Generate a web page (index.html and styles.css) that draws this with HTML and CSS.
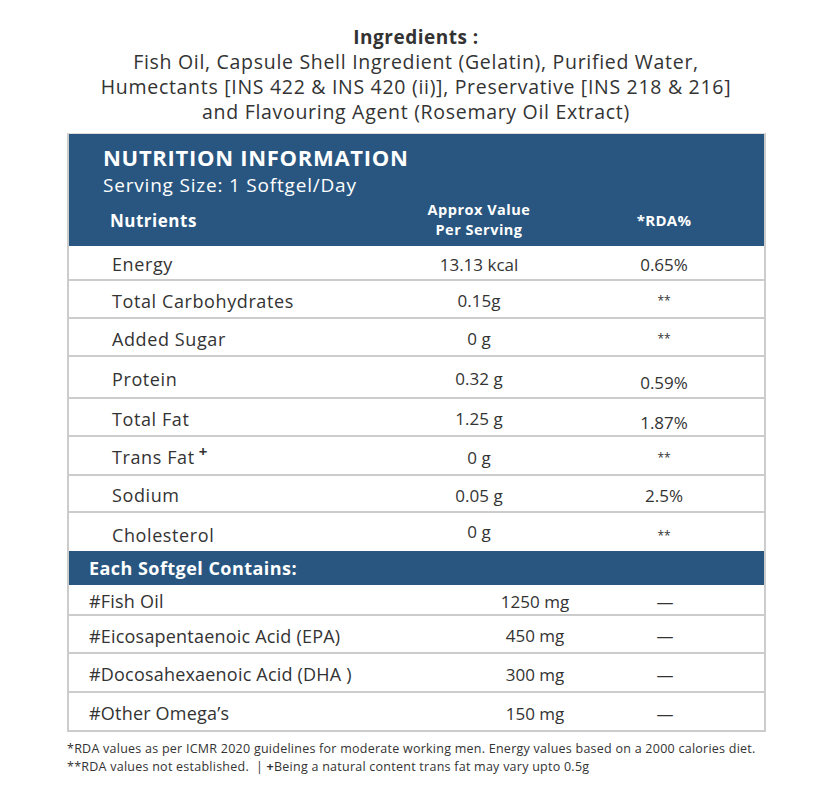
FILE: index.html
```html
<!DOCTYPE html>
<html>
<head>
<meta charset="utf-8">
<link rel="stylesheet" href="styles.css">
</head>
<body>
<div class="page">
  <section class="ingredients">
    <h2 class="ing-title">Ingredients :</h2>
    <p class="ing-text">Fish Oil, Capsule Shell Ingredient (Gelatin), Purified Water,<br>Humectants [INS 422 &amp; INS 420 (ii)], Preservative [INS 218 &amp; 216]<br>and Flavouring Agent (Rosemary Oil Extract)</p>
  </section>

  <section class="table">
    <div class="head">
      <div class="head-title">NUTRITION INFORMATION</div>
      <div class="head-serving">Serving Size: 1 Softgel/Day</div>
      <div class="head-cols">
        <div class="hc-name">Nutrients</div>
        <div class="hc-val"><div>Approx Value</div><div>Per Serving</div></div>
        <div class="hc-rda">*RDA%</div>
      </div>
    </div>

    <div class="row r35"><span class="c-name">Energy</span><span class="c-val">13.13 kcal</span><span class="c-rda">0.65%</span></div>
    <div class="row"><span class="c-name">Total Carbohydrates</span><span class="c-val">0.15g</span><span class="c-rda star">**</span></div>
    <div class="row"><span class="c-name">Added Sugar</span><span class="c-val">0 g</span><span class="c-rda star">**</span></div>
    <div class="row r42"><span class="c-name">Protein</span><span class="c-val">0.32 g</span><span class="c-rda low">0.59%</span></div>
    <div class="row"><span class="c-name">Total Fat</span><span class="c-val">1.25 g</span><span class="c-rda low">1.87%</span></div>
    <div class="row r39"><span class="c-name">Trans Fat<sup class="plus">+</sup></span><span class="c-val">0 g</span><span class="c-rda star">**</span></div>
    <div class="row r37"><span class="c-name">Sodium</span><span class="c-val">0.05 g</span><span class="c-rda">2.5%</span></div>
    <div class="row nb"><span class="c-name">Cholesterol</span><span class="c-val up">0 g</span><span class="c-rda star">**</span></div>

    <div class="sub-head">Each Softgel Contains:</div>

    <div class="row2 r31"><span class="d-name">#Fish Oil</span><span class="d-val">1250 mg</span><span class="d-dash">—</span></div>
    <div class="row2"><span class="d-name">#Eicosapentaenoic Acid (EPA)</span><span class="d-val">450 mg</span><span class="d-dash">—</span></div>
    <div class="row2 r39"><span class="d-name">#Docosahexaenoic Acid (DHA )</span><span class="d-val">300 mg</span><span class="d-dash">—</span></div>
    <div class="row2 r39"><span class="d-name">#Other Omega’s</span><span class="d-val">150 mg</span><span class="d-dash">—</span></div>
  </section>

  <section class="notes">
    <p>*RDA values as per ICMR 2020 guidelines for moderate working men. Energy values based on a 2000 calories diet.</p>
    <p>**RDA values not established. &nbsp;| <b>+</b>Being a natural content trans fat may vary upto 0.5g</p>
  </section>
</div>
</body>
</html>
```

FILE: styles.css
```css
* { box-sizing: border-box; }
html, body { margin: 0; padding: 0; background: #fff; }
body {
  font-family: "Open Sans", "Noto Sans", sans-serif;
  color: #333;
}
.page { width: 832px; }

.ingredients { text-align: center; padding-top: 25px; }
.ing-title {
  margin: 0;
  font-size: 19px;
  font-weight: 700;
  line-height: 24px;
  letter-spacing: 0.5px;
  color: #333;
}
.ing-text {
  margin: 0;
  font-size: 19.5px;
  line-height: 25px;
  letter-spacing: 0.7px;
  color: #333;
}

.table {
  margin: 9px 0 0 67px;
  width: 699px;
  border-left: 2px solid #ccc;
  border-right: 2px solid #ccc;
  border-top: 1px solid #ddd;
}
.head {
  background: #285680;
  color: #fff;
  height: 112px;
  padding: 9px 0 0 34px;
}
.head-title {
  font-size: 22px;
  font-weight: 700;
  line-height: 28px;
  letter-spacing: 0.7px;
}
.head-serving {
  font-size: 19px;
  line-height: 24px;
  letter-spacing: 0.8px;
  margin-top: 2px;
}
.head-cols {
  display: grid;
  grid-template-columns: 256px 240px 130px;
  align-items: center;
  margin-top: 3px;
}
.hc-name { font-size: 17px; font-weight: 700; padding-left: 7px; letter-spacing: 0.5px; }
.hc-val { font-size: 14.5px; font-weight: 700; text-align: center; line-height: 20px; letter-spacing: 0.5px; }
.hc-rda { font-size: 15px; font-weight: 700; text-align: center; letter-spacing: 0.3px; }

.row {
  display: grid;
  grid-template-columns: 290px 240px 130px;
  align-items: center;
  height: 38px;
  padding-top: 3px;
  border-bottom: 2px solid #ccc;
  font-size: 17px;
}
.row.r35 { height: 35px; }
.row.r37 { height: 37px; }
.row.r39 { height: 39px; }
.row.r42 { height: 42px; }
.row.nb { border-bottom: none; padding-top: 6px; }
.c-name { padding-left: 43px; font-size: 18px; letter-spacing: 0.6px; }
.c-val { text-align: center; }
.c-rda { text-align: center; }
.c-rda.low { position: relative; top: 4px; }
.c-val.up { position: relative; top: -4px; }
.star { font-size: 12px; }
.plus { font-size: 15px; font-weight: 700; margin-left: 4px; vertical-align: 7px; line-height: 0; }

.sub-head {
  background: #285680;
  color: #fff;
  height: 34px;
  display: flex;
  align-items: center;
  padding-left: 20px;
  font-size: 18px;
  font-weight: 700;
  letter-spacing: 0.45px;
}
.row2 {
  display: grid;
  grid-template-columns: 386px 160px 100px;
  align-items: center;
  height: 38px;
  padding-top: 3px;
  border-bottom: 2px solid #ccc;
  font-size: 17px;
}
.row2.r31 { height: 31px; }
.row2.r39 { height: 39px; }
.d-name { padding-left: 20px; font-size: 18px; letter-spacing: 0.2px; }
.d-val { text-align: center; }
.d-dash { text-align: center; }

.notes {
  margin: 8px 0 0 67px;
  font-size: 12.5px;
  line-height: 18px;
  letter-spacing: 0.25px;
  color: #333;
}
.notes p { margin: 0; }
```
